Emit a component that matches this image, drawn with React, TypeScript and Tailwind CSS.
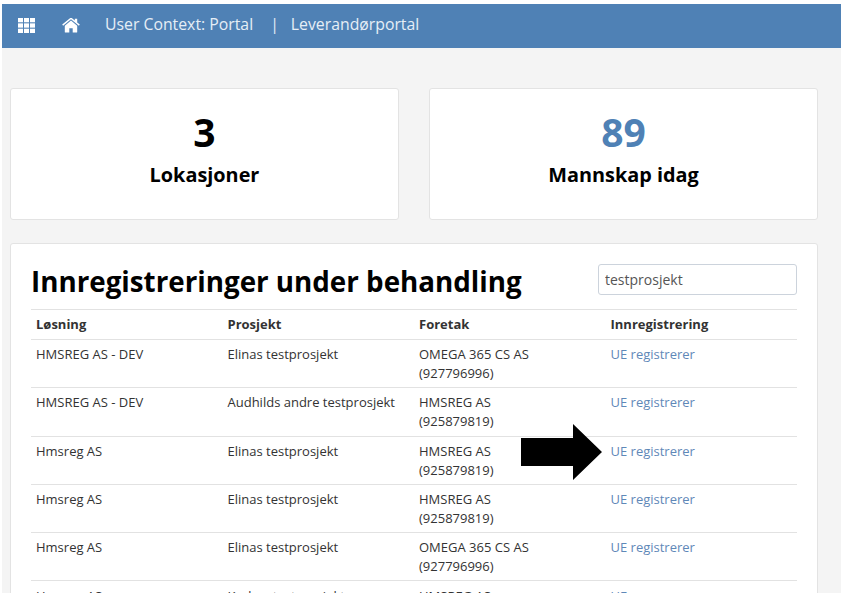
const rows = [
  ["HMSREG AS - DEV", "Elinas testprosjekt", "OMEGA 365 CS AS", "(927796996)", "h-[48px]"],
  ["HMSREG AS - DEV", "Audhilds andre testprosjekt", "HMSREG AS", "(925879819)", "h-[49px]"],
  ["Hmsreg AS", "Elinas testprosjekt", "HMSREG AS", "(925879819)", "h-[48px]"],
  ["Hmsreg AS", "Elinas testprosjekt", "HMSREG AS", "(925879819)", "h-[48px]"],
  ["Hmsreg AS", "Elinas testprosjekt", "OMEGA 365 CS AS", "(927796996)", "h-[48px]"],
];

function GridIcon() {
  return (
    <svg width="17" height="15" viewBox="0 0 17 14" preserveAspectRatio="none" fill="white">
      <rect x="0" y="0" width="5" height="4" />
      <rect x="6" y="0" width="5" height="4" />
      <rect x="12" y="0" width="5" height="4" />
      <rect x="0" y="5" width="5" height="4" />
      <rect x="6" y="5" width="5" height="4" />
      <rect x="12" y="5" width="5" height="4" />
      <rect x="0" y="10" width="5" height="4" />
      <rect x="6" y="10" width="5" height="4" />
      <rect x="12" y="10" width="5" height="4" />
    </svg>
  );
}

function HomeIcon() {
  return (
    <svg width="18" height="15" viewBox="0 0 18 15" fill="white">
      <path d="M9 2.6 2.8 7.8V14a.6.6 0 0 0 .6.6h3.9v-4.4h3.4v4.4h3.9a.6.6 0 0 0 .6-.6V7.8z" />
      <path d="M17.8 6.6 15.2 4.4V.8h-2.4v1.6L9 -.6.2 6.6l.9 1.1L9 1.2l7.9 6.5z" />
    </svg>
  );
}

function StatCard({ value, label, color }: { value: string; label: string; color: string }) {
  return (
    <div className="flex h-[132px] flex-1 flex-col items-center rounded-[3px] border border-[#e3e3e3] bg-white pt-[19px]">
      <div className={`text-[39px] font-bold leading-[48px] ${color}`}>{value}</div>
      <div className="mt-[5px] text-[19.85px] font-bold leading-[28px] text-black">{label}</div>
    </div>
  );
}

export default function App() {
  return (
    <div className="h-[593px] w-[841px] overflow-hidden bg-white pl-[2px] pt-[4px] font-['Open_Sans',sans-serif]">
      <div className="h-full bg-[#f4f4f4]">
        <nav className="flex h-[44px] items-center bg-[#4f81b5] pb-[2px] pl-[16px] text-[15.8px] text-[#e6eef6]">
          <GridIcon />
          <span className="ml-[27px]"><HomeIcon /></span>
          <span className="ml-[25px]">User Context: Portal</span>
          <span className="ml-[17px]">|</span>
          <span className="ml-[12px]">Leverandørportal</span>
        </nav>

        <div className="pl-[8px] pr-[23px] pt-[40px]">
          <div className="flex gap-[30px]">
            <StatCard value="3" label="Lokasjoner" color="text-black" />
            <StatCard value="89" label="Mannskap idag" color="text-[#4f81b5]" />
          </div>

          <div className="mt-[23px] h-[400px] rounded-[3px] border border-[#e3e3e3] bg-white px-[20px]">
            <div className="flex h-[65px] items-start justify-between">
              <h1 className="mt-[17px] text-[27.75px] font-bold leading-[40px] text-black">
                Innregistreringer under behandling
              </h1>
              <input
                readOnly
                value="testprosjekt"
                className="mt-[20px] h-[31px] w-[199px] rounded-[3px] border border-[#ccd3dc] bg-white px-[6px] text-[14px] text-[#555555] outline-none"
              />
            </div>

            <table className="w-[766px] table-fixed border-collapse text-[13px] leading-[19px] text-[#333333]">
              <thead>
                <tr className="h-[30px] border-y border-[#e2e2e2] text-left">
                  <th className="w-[191.5px] px-[5px] font-bold">Løsning</th>
                  <th className="w-[191.5px] px-[5px] font-bold">Prosjekt</th>
                  <th className="w-[191.5px] px-[5px] font-bold">Foretak</th>
                  <th className="w-[191.5px] px-[5px] font-bold">Innregistrering</th>
                </tr>
              </thead>
              <tbody>
                {rows.map((row, i) => (
                  <tr key={i} className={`border-b border-[#e2e2e2] align-top ${row[4]}`}>
                    <td className="px-[5px] pt-[5px]">{row[0]}</td>
                    <td className="px-[5px] pt-[5px]">{row[1]}</td>
                    <td className="px-[5px] pt-[5px]">
                      {row[2]}
                      <br />
                      {row[3]}
                    </td>
                    <td className="px-[5px] pt-[5px] text-[#5f88b8]">
                      {i === 2 ? (
                        <span className="relative">
                          UE registrerer
                          <svg className="absolute left-[-90px] top-[-18px]" width="85" height="56" viewBox="0 0 85 56" fill="black">
                            <path d="M0 14H52V0L81 28 52 56V42H0z" />
                          </svg>
                        </span>
                      ) : (
                        "UE registrerer"
                      )}
                    </td>
                  </tr>
                ))}
                <tr className="align-top">
                  <td className="px-[5px] pt-[6px]">Hmsreg AS</td>
                  <td className="px-[5px] pt-[6px]">Kudyrs testprosjekt</td>
                  <td className="px-[5px] pt-[6px]">HMSREG AS</td>
                  <td className="px-[5px] pt-[6px] text-[#5f88b8]">UE</td>
                </tr>
              </tbody>
            </table>
          </div>
        </div>
      </div>
    </div>
  );
}
